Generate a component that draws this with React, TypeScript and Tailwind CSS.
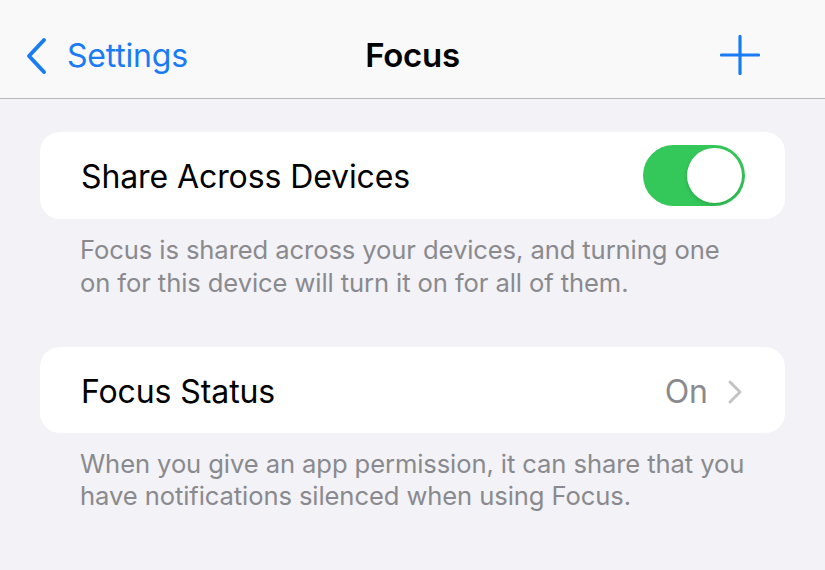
import React from "react";

export default function App() {
  const font = { fontFamily: "Inter, 'Noto Sans', sans-serif" };
  return (
    <div className="w-[825px] h-[570px] overflow-hidden bg-[#f2f2f7] flex flex-col" style={font}>
      <div className="h-[99px] bg-[#f9f9f9] border-b border-[#b8b8bb] flex items-center px-[25px] relative">
        <div className="flex items-center gap-[18px] text-[#1a7cf5] pt-[13px]">
          <svg width="24" height="38" viewBox="0 0 24 38" fill="none">
            <path d="M19 3 L4 19 L19 35" stroke="#1a7cf5" strokeWidth="4" strokeLinecap="round" strokeLinejoin="round" />
          </svg>
          <span className="text-[32px] tracking-[-0.2px] leading-none">Settings</span>
        </div>
        <div className="absolute left-0 right-0 top-[13px] bottom-0 flex items-center justify-center pointer-events-none">
          <span className="text-[33px] font-semibold text-black tracking-[-0.3px] leading-none">Focus</span>
        </div>
        <div className="ml-auto pt-[12px] mr-[40px]">
          <svg width="40" height="40" viewBox="0 0 40 40" fill="none">
            <path d="M20 1.5 V38.5 M1.5 20 H38.5" stroke="#1a7cf5" strokeWidth="3.2" strokeLinecap="round" />
          </svg>
        </div>
      </div>

      <div className="px-[40px] pt-[33px]">
        <div className="h-[87px] bg-white rounded-[20px] flex items-center pl-[41px] pr-[40px] pt-[3px]">
          <span className="text-[32px] text-black tracking-[-0.1px]">Share Across Devices</span>
          <div className="ml-auto w-[102px] h-[61px] rounded-full bg-[#34c759] flex items-center justify-end pr-[3px] -mt-[3px]">
            <div className="w-[55px] h-[55px] rounded-full bg-white shadow-[0_2px_4px_rgba(0,0,0,0.15)]" />
          </div>
        </div>
        <p className="pl-[40px] pr-[40px] pt-[14px] text-[25.6px] leading-[33px] text-[#8a8a8e] tracking-[-0.1px]">
          Focus is shared across your devices, and turning one on for this device will turn it on for all of them.
        </p>

        <div className="mt-[48px] h-[86px] bg-white rounded-[20px] flex items-center pl-[41px] pr-[42px] pt-[3px]">
          <span className="text-[32px] text-black tracking-[-0.1px]">Focus Status</span>
          <span className="ml-auto text-[32px] text-[#8a8a8e]">On</span>
          <svg className="ml-[19px]" width="16" height="26" viewBox="0 0 16 26" fill="none">
            <path d="M3 3 L13 13 L3 23" stroke="#c4c4c7" strokeWidth="3" strokeLinecap="round" strokeLinejoin="round" />
          </svg>
        </div>
        <p className="pl-[40px] pr-[40px] pt-[15px] text-[25.6px] leading-[32px] text-[#8a8a8e] tracking-[-0.1px]">
          When you give an app permission, it can share that you have notifications silenced when using Focus.
        </p>
      </div>
    </div>
  );
}
